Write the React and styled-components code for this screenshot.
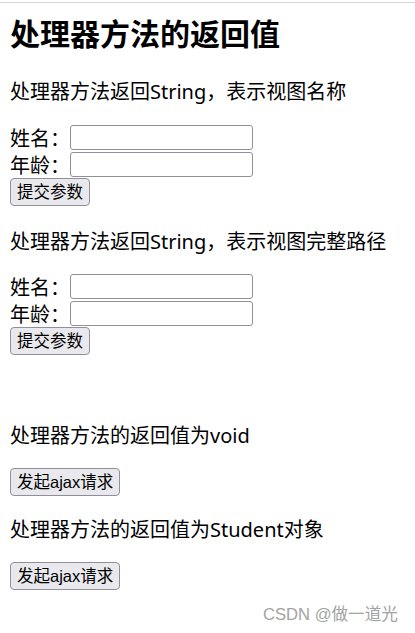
import React from "react";
import styled, { createGlobalStyle } from "styled-components";

const GlobalStyle = createGlobalStyle`
  html, body {
    margin: 0;
    padding: 0;
    background: #ffffff;
  }
  body {
    font-family: "Noto Sans", "Noto Sans CJK SC", sans-serif;
    color: #000000;
  }
  * { box-sizing: border-box; }
`;

const Page = styled.div`
  position: relative;
  min-height: 633px;
  overflow: hidden;
`;

const TopRule = styled.div`
  margin-top: 2px;
  height: 1px;
  background: #d6d6d6;
`;

const Content = styled.main`
  padding: 0 10px;
`;

const Title = styled.h2`
  margin: 11px 0 0;
  font-size: 30px;
  line-height: 40px;
  font-weight: 700;
`;

const Para = styled.p`
  margin: ${(p) => p.$gap}px 0 0;
  font-size: 20px;
  line-height: 27px;
`;

const Form = styled.form`
  margin-top: ${(p) => p.$gap}px;
  display: flex;
  flex-direction: column;
  align-items: flex-start;
`;

const Row = styled.label`
  display: flex;
  align-items: center;
  height: 27px;
  font-size: 20px;
`;

const LabelText = styled.span`
  width: 60px;
  white-space: nowrap;
`;

const Input = styled.input`
  width: 183px;
  height: 25px;
  margin: 0;
  padding: 0 4px;
  border: 1px solid #8f8f9d;
  border-radius: 3px;
  background: #ffffff;
  font-size: 16px;
`;

const Button = styled.button`
  display: block;
  margin: ${(p) => p.$gap || 0}px 0 0;
  height: 28px;
  padding: 0 6px;
  border: 1px solid #8f8f9d;
  border-radius: 4px;
  background: #e9e9ed;
  color: #000000;
  font-family: "Liberation Sans", "Noto Sans CJK SC", sans-serif;
  font-size: 16.5px;
  line-height: 26px;
  cursor: pointer;
`;

const Watermark = styled.div`
  position: absolute;
  left: 263px;
  top: 603px;
  font-family: "Liberation Sans", "Noto Sans CJK SC", sans-serif;
  font-size: 16.6px;
  line-height: 24px;
  color: #a3a3a3;
  white-space: nowrap;
`;

function ParamForm({ gap }) {
  return (
    <Form $gap={gap} onSubmit={(e) => e.preventDefault()}>
      <Row>
        <LabelText>姓名：</LabelText>
        <Input type="text" name="name" />
      </Row>
      <Row>
        <LabelText>年龄：</LabelText>
        <Input type="text" name="age" />
      </Row>
      <Button type="submit">提交参数</Button>
    </Form>
  );
}

export default function App() {
  return (
    <Page>
      <GlobalStyle />
      <TopRule />
      <Content>
        <Title>处理器方法的返回值</Title>
        <Para $gap={24}>处理器方法返回String，表示视图名称</Para>
        <ParamForm gap={19} />
        <Para $gap={22}>处理器方法返回String，表示视图完整路径</Para>
        <ParamForm gap={18} />
        <Para $gap={67}>处理器方法的返回值为void</Para>
        <Button type="button" $gap={19}>发起ajax请求</Button>
        <Para $gap={20}>处理器方法的返回值为Student对象</Para>
        <Button type="button" $gap={19}>发起ajax请求</Button>
      </Content>
      <Watermark>CSDN @做一道光</Watermark>
    </Page>
  );
}
